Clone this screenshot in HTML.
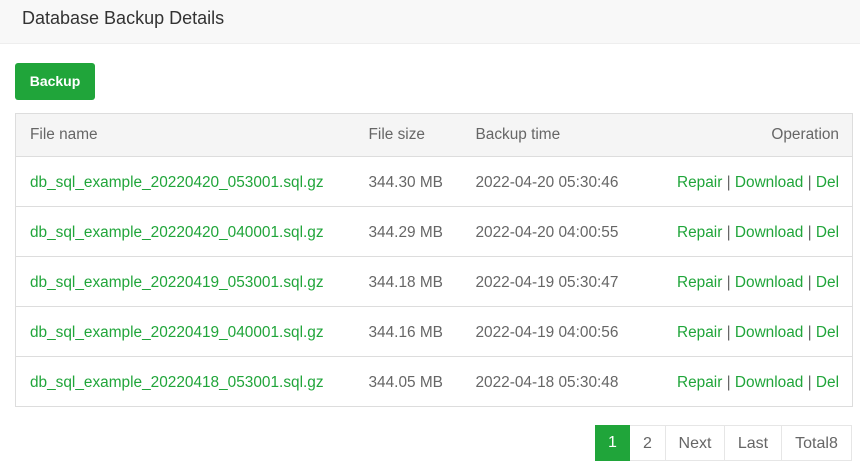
<!DOCTYPE html>
<html><head><meta charset="utf-8"><style>
*{margin:0;padding:0;box-sizing:border-box}
body{width:860px;height:472px;background:#fff;font-family:"Liberation Sans",sans-serif;color:#666;overflow:hidden;position:relative}
.hd{height:44px;background:#f8f8f8;border-bottom:1px solid #eee;padding-left:22px;line-height:36px;font-size:18px;color:#333}
.btn{position:absolute;left:15px;top:63px;width:80px;height:37px;background:#20a53a;border-radius:3px;color:#fff;font-size:14px;font-weight:bold;text-align:center;line-height:37px}
table{position:absolute;left:15px;top:113px;width:838px;border-collapse:collapse;border:1px solid #ddd;font-size:15.4px}
th{background:#f5f5f5;height:43px;font-weight:normal;text-align:left;color:#666;border-bottom:1px solid #ddd}
td{height:50px;border-bottom:1px solid #ddd;color:#666;padding-top:2px}
.g{color:#20a53a}
.c1{padding-left:14px;width:353px}.c2{width:107px}.r{text-align:right;padding-right:13px}
.pg{position:absolute;top:425px;left:595px;display:flex;height:36px;font-size:16px}
.pg div{border:1px solid #e6e6e6;border-left:none;line-height:36px;text-align:center;color:#666}
.pg div:first-child{border:none;background:#20a53a;color:#fff}
</style></head><body>
<div class="hd">Database Backup Details</div>
<div class="btn">Backup</div>
<table>
<tr><th class="c1">File name</th><th class="c2">File size</th><th>Backup time</th><th class="r">Operation</th></tr>
<tr><td class="c1 g">db_sql_example_20220420_053001.sql.gz</td><td>344.30 MB</td><td>2022-04-20 05:30:46</td><td class="r"><span class="g">Repair</span> | <span class="g">Download</span> | <span class="g">Del</span></td></tr>
<tr><td class="c1 g">db_sql_example_20220420_040001.sql.gz</td><td>344.29 MB</td><td>2022-04-20 04:00:55</td><td class="r"><span class="g">Repair</span> | <span class="g">Download</span> | <span class="g">Del</span></td></tr>
<tr><td class="c1 g">db_sql_example_20220419_053001.sql.gz</td><td>344.18 MB</td><td>2022-04-19 05:30:47</td><td class="r"><span class="g">Repair</span> | <span class="g">Download</span> | <span class="g">Del</span></td></tr>
<tr><td class="c1 g">db_sql_example_20220419_040001.sql.gz</td><td>344.16 MB</td><td>2022-04-19 04:00:56</td><td class="r"><span class="g">Repair</span> | <span class="g">Download</span> | <span class="g">Del</span></td></tr>
<tr><td class="c1 g">db_sql_example_20220418_053001.sql.gz</td><td>344.05 MB</td><td>2022-04-18 05:30:48</td><td class="r"><span class="g">Repair</span> | <span class="g">Download</span> | <span class="g">Del</span></td></tr>
</table>
<div class="pg"><div style="width:35px">1</div><div style="width:36px">2</div><div style="width:59px">Next</div><div style="width:57px">Last</div><div style="width:70px">Total8</div></div>
</body></html>
